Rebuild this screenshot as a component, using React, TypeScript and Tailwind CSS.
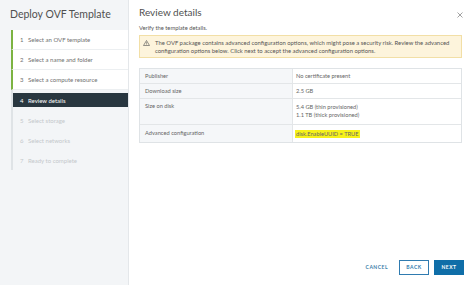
import React from "react";

const steps = [
  { n: 1, label: "Select an OVF template", state: "done" },
  { n: 2, label: "Select a name and folder", state: "done" },
  { n: 3, label: "Select a compute resource", state: "done" },
  { n: 4, label: "Review details", state: "active" },
  { n: 5, label: "Select storage", state: "todo" },
  { n: 6, label: "Select networks", state: "todo" },
  { n: 7, label: "Ready to complete", state: "todo" },
];

export default function App() {
  return (
    <div className="flex w-[474px] h-[285px] bg-white font-['Lato',sans-serif] overflow-hidden">
      <div className="w-[129px] shrink-0 bg-[#f3f5f7] border-r border-[#e4e7ea] flex flex-col">
        <div className="h-[30px] pl-[10px] pt-[8px] text-[10.5px] leading-[13px] text-[#505050]">
          Deploy OVF Template
        </div>
        <div className="ml-[11px] flex flex-col">
          {steps.map((s) => {
            if (s.state === "done") {
              return (
                <div
                  key={s.n}
                  className="h-[20px] border-l-2 border-[#7cb342] bg-white border-b border-b-[#eceff1] flex items-center pl-[7px] text-[6px] text-[#707070]"
                >
                  <span className="w-[8px]">{s.n}</span>
                  <span>{s.label}</span>
                </div>
              );
            }
            if (s.state === "active") {
              return (
                <div key={s.n} className="h-[20px] border-l-2 border-[#dfe3e6] flex items-center">
                  <div className="h-[14px] w-full bg-[#293740] flex items-center pl-[7px] text-[6px] text-white">
                    <span className="w-[8px]">{s.n}</span>
                    <span>{s.label}</span>
                  </div>
                </div>
              );
            }
            return (
              <div
                key={s.n}
                className="h-[20px] border-l-2 border-[#dfe3e6] flex items-center pl-[7px] text-[6px] text-[#c4c8cb]"
              >
                <span className="w-[8px]">{s.n}</span>
                <span>{s.label}</span>
              </div>
            );
          })}
        </div>
      </div>

      <div className="flex-1 flex flex-col pl-[10px] pr-[12px]">
        <div className="flex items-start justify-between pt-[6px] h-[24px]">
          <div className="text-[10px] leading-[13px] text-[#505050]">Review details</div>
          <svg width="6" height="6" viewBox="0 0 6 6" className="mt-[6px] mr-[-1px]">
            <path d="M0.5 0.5 L5.5 5.5 M5.5 0.5 L0.5 5.5" stroke="#8a8a8a" strokeWidth="0.8" />
          </svg>
        </div>
        <div className="text-[5.8px] leading-[7px] text-[#555]">Verify the template details.</div>

        <div className="mt-[4px] h-[23px] bg-[#fdf4dc] border border-[#f2dfa6] flex pl-[3px] pt-[3px]">
          <svg width="7" height="6" viewBox="0 0 14 12" className="mt-[1px] shrink-0">
            <path d="M7 1 L13 11 L1 11 Z" fill="none" stroke="#5a5a5a" strokeWidth="1.3" strokeLinejoin="round" />
            <path d="M7 4.5 L7 7.5" stroke="#5a5a5a" strokeWidth="1.3" />
            <circle cx="7" cy="9.2" r="0.7" fill="#5a5a5a" />
          </svg>
          <div className="ml-[5px] text-[5.9px] leading-[8px] text-[#555] whitespace-nowrap">
            The OVF package contains advanced configuration options, which might pose a security risk. Review the advanced
            <br />
            configuration options below. Click next to accept the advanced configuration options.
          </div>
        </div>

        <div className="mt-[10px] border border-[#dfe3e6] text-[5.7px] text-[#666]">
          <div className="flex h-[15px] border-b border-[#e3e6e8]">
            <div className="w-[153px] bg-[#f5f7f9] border-r border-[#e3e6e8] pl-[5px] flex items-center">Publisher</div>
            <div className="flex-1 pl-[3px] flex items-center">No certificate present</div>
          </div>
          <div className="flex h-[15px] border-b border-[#e3e6e8]">
            <div className="w-[153px] bg-[#f5f7f9] border-r border-[#e3e6e8] pl-[5px] flex items-center">Download size</div>
            <div className="flex-1 pl-[3px] flex items-center">2.5 GB</div>
          </div>
          <div className="flex h-[26px] border-b border-[#e3e6e8]">
            <div className="w-[153px] bg-[#f5f7f9] border-r border-[#e3e6e8] pl-[5px] pt-[3px]">Size on disk</div>
            <div className="flex-1 pl-[3px] pt-[4px] leading-[8px]">
              <div>5.4 GB (thin provisioned)</div>
              <div>1.1 TB (thick provisioned)</div>
            </div>
          </div>
          <div className="flex h-[17px]">
            <div className="w-[153px] bg-[#f5f7f9] border-r border-[#e3e6e8] pl-[5px] flex items-center">Advanced configuration</div>
            <div className="flex-1 pl-[2px] flex items-center">
              <span className="bg-[#f6f21a] px-[1px] leading-[8px] text-[#666]">disk.EnableUUID = TRUE</span>
            </div>
          </div>
        </div>

        <div className="flex-1" />
        <div className="flex items-center justify-end gap-[5px] mb-[10px] mr-[-2px] text-[5px] tracking-[0.5px] font-bold">
          <div className="text-[#3b7ea8] pr-[6px]">CANCEL</div>
          <div className="w-[30px] h-[15px] border border-[#2f7bb0] text-[#2f7bb0] flex items-center justify-center bg-white">BACK</div>
          <div className="w-[30px] h-[15px] bg-[#0f6ea8] text-white flex items-center justify-center">NEXT</div>
        </div>
      </div>
    </div>
  );
}
